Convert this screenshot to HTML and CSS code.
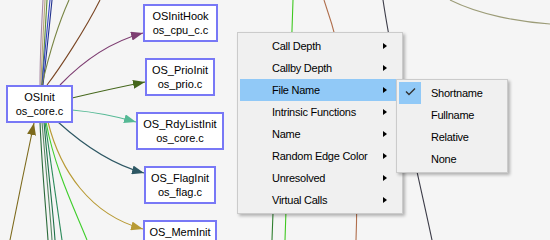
FILE: index.html
```html
<!DOCTYPE html>
<html lang="en">
<head>
  <meta charset="UTF-8">
  <title>Call Graph</title>
  <link rel="stylesheet" href="styles.css">
</head>
<body>

  <div class="canvas">
    <svg class="edges" width="550" height="240" viewBox="0 0 550 240">
      <defs>
        <marker id="a-purple" markerWidth="12" markerHeight="9" refX="12" refY="4.5" orient="auto" markerUnits="userSpaceOnUse"><polygon points="0,0 12,4.5 0,9" fill="#7e3e72"/></marker>
        <marker id="a-green" markerWidth="12" markerHeight="9" refX="12" refY="4.5" orient="auto" markerUnits="userSpaceOnUse"><polygon points="0,0 12,4.5 0,9" fill="#45671c"/></marker>
        <marker id="a-teal" markerWidth="12" markerHeight="9" refX="12" refY="4.5" orient="auto" markerUnits="userSpaceOnUse"><polygon points="0,0 12,4.5 0,9" fill="#55b995"/></marker>
        <marker id="a-slate" markerWidth="12" markerHeight="9" refX="12" refY="4.5" orient="auto" markerUnits="userSpaceOnUse"><polygon points="0,0 12,4.5 0,9" fill="#2d5763"/></marker>
        <marker id="a-gold" markerWidth="12" markerHeight="9" refX="12" refY="4.5" orient="auto" markerUnits="userSpaceOnUse"><polygon points="0,0 12,4.5 0,9" fill="#b89a34"/></marker>
        <marker id="a-olive" markerWidth="12" markerHeight="9" refX="12" refY="4.5" orient="auto" markerUnits="userSpaceOnUse"><polygon points="0,0 12,4.5 0,9" fill="#7d6a1c"/></marker>
      </defs>

      <!-- callers above OSInit -->
      <path class="edge" d="M40,85 C40,50 42,20 43,0" stroke="#a98aa6"/>
      <path class="edge" d="M41,85 C42,50 44,20 45,0" stroke="#b9a37a"/>
      <path class="edge" d="M42,85 C44,50 46,20 47,0" stroke="#5f8c3c"/>
      <path class="edge" d="M42,85 C45,50 48,20 50,0" stroke="#3445c4"/>
      <path class="edge" d="M43,85 C47,50 50,20 52,0" stroke="#22328e"/>
      <path class="edge" d="M42,85 C50,50 60,20 69,0" stroke="#788544"/>
      <path class="edge" d="M47,85 C60,68 85,30 100,0" stroke="#7a4624"/>

      <!-- callees of OSInit -->
      <path class="edge" d="M60,85 C82,62 110,42 143,33" stroke="#7e3e72" marker-end="url(#a-purple)"/>
      <path class="edge" d="M72,98 Q110,89 145,82" stroke="#45671c" marker-end="url(#a-green)"/>
      <path class="edge" d="M72,110 Q105,113 136,122" stroke="#55b995" marker-end="url(#a-teal)"/>
      <path class="edge" d="M58,122 C80,142 110,164 144,173" stroke="#2d5763" marker-end="url(#a-slate)"/>
      <path class="edge" d="M48,122 C60,170 90,215 143,229" stroke="#b89a34" marker-end="url(#a-gold)"/>
      <path class="edge" d="M10,240 Q22,180 34,123" stroke="#7d6a1c" marker-end="url(#a-olive)"/>

      <!-- lines going down -->
      <path class="edge" d="M40,122 C42,170 46,210 48,240" stroke="#2a6a3a"/>
      <path class="edge" d="M42,122 C46,170 50,210 52,240" stroke="#5a8a66"/>
      <path class="edge" d="M44,122 C48,170 53,210 55,240" stroke="#1e7048"/>
      <path class="edge" d="M45,122 C52,170 58,210 62,240" stroke="#2a8a5a"/>
      <path class="edge" d="M46,122 C55,170 75,210 87,240" stroke="#3fce2c"/>

      <!-- lines in the middle -->
      <path class="edge" d="M293,0 C291,80 287,160 285,240" stroke="#3fc820"/>
      <path class="edge" d="M276,120 C275,170 273,210 272,240" stroke="#2f7f2f"/>
      <path class="edge" d="M324,0 C345,60 360,140 356,240" stroke="#b06e4c"/>
      <path class="edge" d="M383,0 C395,80 415,160 432,240" stroke="#3c3c48"/>
      <path class="edge" d="M450,0 C480,15 520,22 550,24" stroke="#9c9c78"/>
    </svg>

    <div class="node n-hook">OSInitHook<br>os_cpu_c.c</div>
    <div class="node n-prio">OS_PrioInit<br>os_prio.c</div>
    <div class="node n-rdy">OS_RdyListInit<br>os_core.c</div>
    <div class="node n-flag">OS_FlagInit<br>os_flag.c</div>
    <div class="node n-mem">OS_MemInit</div>
    <div class="node n-init">OSInit<br>os_core.c</div>
  </div>

  <div class="menu main-menu">
    <div class="item"><span>Call Depth</span><span class="arrow"></span></div>
    <div class="item"><span>Callby Depth</span><span class="arrow"></span></div>
    <div class="item active"><span>File Name</span><span class="arrow"></span></div>
    <div class="item"><span>Intrinsic Functions</span><span class="arrow"></span></div>
    <div class="item"><span>Name</span><span class="arrow"></span></div>
    <div class="item"><span>Random Edge Color</span><span class="arrow"></span></div>
    <div class="item"><span>Unresolved</span><span class="arrow"></span></div>
    <div class="item"><span>Virtual Calls</span><span class="arrow"></span></div>
  </div>

  <div class="menu sub-menu">
    <div class="sub-item">
      <span class="check">
        <svg width="22" height="22" viewBox="0 0 22 22"><polyline points="7,9.5 10,12.5 16,6.5" fill="none" stroke="#333" stroke-width="1.4"/></svg>
      </span>
      <span>Shortname</span>
    </div>
    <div class="sub-item"><span class="check"></span><span>Fullname</span></div>
    <div class="sub-item"><span class="check"></span><span>Relative</span></div>
    <div class="sub-item"><span class="check"></span><span>None</span></div>
  </div>

</body>
</html>
```

FILE: styles.css
```css
body {
  margin: 0;
  width: 550px;
  height: 240px;
  overflow: hidden;
  background: #f5f5f5;
  font-family: 'Liberation Sans', Arial, sans-serif;
  position: relative;
}

.canvas {
  position: relative;
  width: 550px;
  height: 240px;
  overflow: hidden;
}

.edges {
  position: absolute;
  left: 0;
  top: 0;
}

.edge {
  fill: none;
  stroke-width: 1.1;
}

.node {
  position: absolute;
  box-sizing: border-box;
  height: 38px;
  padding-top: 3px;
  background: #fff;
  border: 2px solid #7878f6;
  font-size: 11px;
  line-height: 14px;
  text-align: center;
  color: #000;
}

.n-hook { left: 143px; top: 4px; width: 75px; }
.n-prio { left: 145px; top: 58px; width: 70px; }
.n-rdy  { left: 136px; top: 112px; width: 88px; }
.n-flag { left: 144px; top: 166px; width: 72px; }
.n-mem  { left: 143px; top: 220px; width: 74px; height: 20px; border-bottom: 0; }
.n-init { left: 6px; top: 85px; width: 67px; }

.menu {
  position: absolute;
  box-sizing: border-box;
  background: #f0f0f0;
  border: 1px solid #cbcbcb;
  box-shadow: 2px 2px 3px rgba(0, 0, 0, 0.28);
  font-size: 11px;
  letter-spacing: -0.25px;
  color: #000;
}

.main-menu {
  left: 237px;
  top: 32px;
  width: 166px;
  height: 182px;
  padding: 2px 1px;
}

.item {
  display: flex;
  align-items: center;
  justify-content: space-between;
  height: 22px;
  margin-left: 1px;
  padding-left: 32px;
  padding-right: 14px;
}

.item.active {
  background: #91c9f7;
}

.arrow {
  width: 0;
  height: 0;
  border-top: 3.5px solid transparent;
  border-bottom: 3.5px solid transparent;
  border-left: 4px solid #000;
}

.sub-menu {
  left: 396px;
  top: 79px;
  width: 112px;
  height: 94px;
  padding: 2px 1px;
}

.sub-item {
  display: flex;
  align-items: center;
  height: 22px;
  margin-left: 1px;
}

.check {
  width: 22px;
  height: 22px;
  margin-right: 10px;
}

.sub-item:first-child .check {
  background: #91c9f7;
}

.check svg {
  display: block;
}
```
